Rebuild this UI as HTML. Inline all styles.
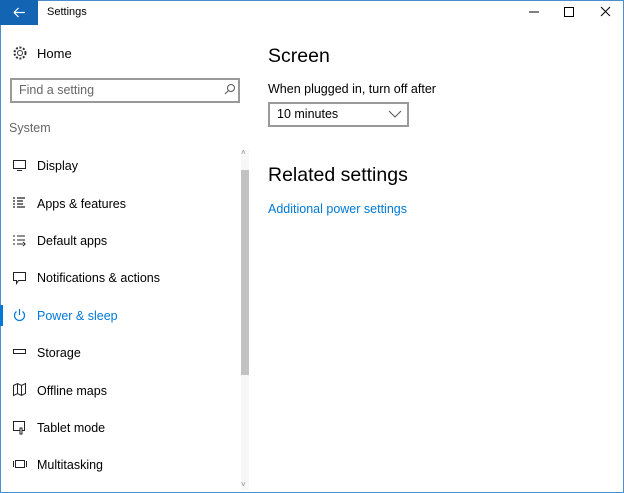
<!DOCTYPE html>
<html><head><meta charset="utf-8"><style>
*{margin:0;padding:0;box-sizing:border-box}
body{width:624px;height:493px;overflow:hidden;background:#fff;font-family:"Segoe UI","Liberation Sans",sans-serif;color:#000;position:relative}
.win{position:absolute;left:0;top:0;width:624px;height:493px;border:1px solid #4a90d0}
.t{position:absolute;white-space:nowrap}
.back{position:absolute;left:0;top:0;width:38px;height:25px;background:#1464b4}
.item{position:absolute;left:37px;font-size:12.5px}
.ic{position:absolute;left:12px}
</style></head><body>
<div class="win"></div>
<div class="back"><svg width="38" height="25"><path d="M14 12.5H25M14 12.5l4.5-4.5M14 12.5l4.5 4.5" stroke="#fff" stroke-width="1.2" fill="none"/></svg></div>
<div class="t" style="left:47px;top:6px;font-size:11px">Settings</div>
<svg class="t" style="left:522px;top:4px" width="100" height="16"><path d="M7 8h10" stroke="#000"/><rect x="42.5" y="3.5" width="9" height="9" stroke="#000" fill="none"/><path d="M79 3l9 9M88 3l-9 9" stroke="#000"/></svg>
<svg class="t" style="left:12px;top:45px" width="16" height="16"><circle cx="8" cy="8" r="2.5" stroke="#333" fill="none"/><circle cx="8" cy="8" r="5.5" stroke="#333" stroke-dasharray="2 1.6" stroke-width="2" fill="none"/></svg>
<div class="t" style="left:37px;top:46px;font-size:13px">Home</div>
<div class="t" style="left:10px;top:78px;width:230px;height:25px;border:2px solid #999"></div>
<div class="t" style="left:19px;top:83px;font-size:12.5px;color:#666">Find a setting</div>
<svg class="t" style="left:223px;top:83px" width="14" height="14"><circle cx="8" cy="5" r="3.5" stroke="#555" fill="none"/><path d="M5.5 7.5L2 11" stroke="#555"/></svg>
<div class="t" style="left:9px;top:121px;font-size:12.5px;color:#666">System</div>
<svg class="ic t" style="top:158px" width="16" height="14"><rect x="1.5" y="2.5" width="12" height="8" stroke="#222" fill="none"/><path d="M5 12.5h5" stroke="#222"/></svg>
<div class="item t" style="top:159px">Display</div>
<svg class="ic t" style="top:196px" width="16" height="14"><path d="M1 2h2M1 5h2M1 8h2M1 11h2M5 2h8M5 5h6M5 8h6M5 11h8" stroke="#222" stroke-width="1.2"/></svg>
<div class="item t" style="top:197px">Apps &amp; features</div>
<svg class="ic t" style="top:233px" width="16" height="14"><path d="M1 3h2M1 7h2M1 11h2M5 3h8M5 7h8M5 11h6M11 9l2 2-2 2" stroke="#222" stroke-width="1.1" fill="none"/></svg>
<div class="item t" style="top:234px">Default apps</div>
<svg class="ic t" style="top:270px" width="16" height="16"><path d="M1.5 2.5h12v8h-7l-2 3v-3h-3z" stroke="#222" fill="none"/></svg>
<div class="item t" style="top:271px">Notifications &amp; actions</div>
<div class="t" style="left:0;top:305px;width:3px;height:21px;background:#0078d7"></div>
<svg class="ic t" style="top:308px" width="16" height="16"><path d="M4.5 3.5A5 5 0 1 0 10.5 3.5M7.5 1v6" stroke="#0078d7" stroke-width="1.2" fill="none"/></svg>
<div class="item t" style="top:309px;color:#0078d7">Power &amp; sleep</div>
<svg class="ic t" style="top:346px" width="16" height="12"><rect x="1.5" y="3.5" width="12" height="4" stroke="#222" fill="none"/></svg>
<div class="item t" style="top:346px">Storage</div>
<svg class="ic t" style="top:382px" width="16" height="16"><path d="M1.5 3.5l4-2 4 2 4-2v10l-4 2-4-2-4 2zM5.5 1.5v10M9.5 3.5v10" stroke="#222" fill="none"/></svg>
<div class="item t" style="top:384px">Offline maps</div>
<svg class="ic t" style="top:420px" width="16" height="16"><rect x="1.5" y="1.5" width="11" height="9" stroke="#222" fill="none"/><path d="M8 14V8h2v6z" stroke="#222" fill="#fff"/></svg>
<div class="item t" style="top:421px">Tablet mode</div>
<svg class="ic t" style="top:458px" width="16" height="12"><path d="M1.5 3v6M3.5 2.5h9v7h-9zM14.5 3v6" stroke="#222" fill="none"/></svg>
<div class="item t" style="top:458px">Multitasking</div>
<div class="t" style="left:241px;top:150px;width:8px;height:340px;background:#f7f7f7"></div>
<div class="t" style="left:241px;top:170px;width:8px;height:205px;background:#c2c2c2"></div>
<div class="t" style="left:241px;top:148px;font-size:8px;color:#888">˄</div>
<div class="t" style="left:241px;top:480px;font-size:8px;color:#888">˅</div>
<div class="t" style="left:268px;top:45px;font-size:19.5px;font-weight:300">Screen</div>
<div class="t" style="left:268px;top:82px;font-size:12.5px">When plugged in, turn off after</div>
<div class="t" style="left:268px;top:102px;width:141px;height:25px;border:2px solid #999"></div>
<div class="t" style="left:277px;top:107px;font-size:12.5px">10 minutes</div>
<svg class="t" style="left:388px;top:110px" width="14" height="8"><path d="M1 1l6 6 6-6" stroke="#555" fill="none"/></svg>
<div class="t" style="left:268px;top:164px;font-size:19.5px;font-weight:300">Related settings</div>
<div class="t" style="left:268px;top:202px;font-size:12.5px;color:#0078d7">Additional power settings</div>
</body></html>
